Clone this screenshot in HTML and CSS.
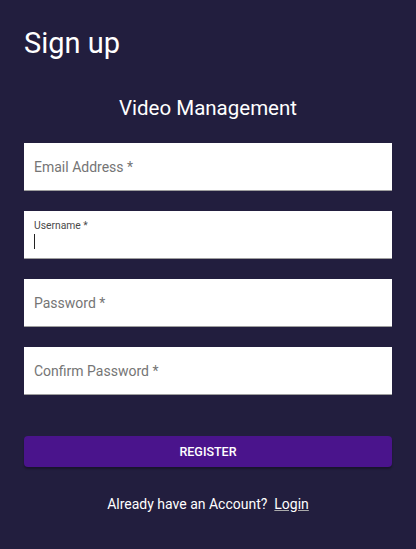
FILE: index.html
```html
<!DOCTYPE html>
<html lang="en">
<head>
<meta charset="utf-8">
<title>Sign up</title>
<link rel="stylesheet" href="styles.css">
</head>
<body>
<main class="page">
  <h1 class="title">Sign up</h1>
  <h2 class="subtitle">Video Management</h2>
  <form class="form">
    <div class="field"><span class="placeholder">Email Address *</span></div>
    <div class="field field-focused"><span class="label">Username *</span><span class="caret"></span></div>
    <div class="field"><span class="placeholder">Password *</span></div>
    <div class="field"><span class="placeholder">Confirm Password *</span></div>
    <button type="button" class="register">REGISTER</button>
  </form>
  <p class="footer">Already have an Account?&nbsp; <a class="login" href="#">Login</a></p>
</main>
</body>
</html>
```
FILE: styles.css
```css
html, body {
  margin: 0;
  padding: 0;
  background: #221e3e;
  font-family: Roboto, "Liberation Sans", sans-serif;
}
.page {
  padding: 24px 24px 0 24px;
  display: flex;
  flex-direction: column;
}
.title {
  margin: 0;
  font-size: 29px;
  font-weight: 400;
  color: #ffffff;
  line-height: 38px;
}
.subtitle {
  margin: 34px 0 0 0;
  font-size: 20.5px;
  font-weight: 400;
  color: #ffffff;
  text-align: center;
  line-height: 24px;
}
.form {
  margin-top: 23px;
  display: flex;
  flex-direction: column;
  gap: 20px;
}
.field {
  position: relative;
  height: 47px;
  background: #ffffff;
  border-bottom: 1px solid #9e9e9e;
  box-sizing: content-box;
  display: flex;
  align-items: center;
  padding: 0 10px;
}
.placeholder {
  font-size: 14px;
  color: #757575;
}
.field-focused {
  flex-direction: column;
  align-items: flex-start;
  justify-content: flex-start;
}
.label {
  margin-top: 8px;
  font-size: 10.3px;
  color: #4a4a4a;
  line-height: 13px;
}
.caret {
  margin-top: 2px;
  width: 1px;
  height: 15px;
  background: #222;
}
.register {
  margin-top: 21px;
  height: 31px;
  border: none;
  border-radius: 4px;
  background: #4a148c;
  color: #ffffff;
  font-family: Roboto, "Liberation Sans", sans-serif;
  font-size: 12.5px;
  font-weight: 500;
  box-shadow: 0 2px 2px rgba(0,0,0,0.3);
}
.footer {
  margin: 27px 0 0 0;
  text-align: center;
  font-size: 14px;
  line-height: 20px;
  color: #ffffff;
}
.login {
  color: #ffffff;
  text-decoration: underline;
  text-decoration-color: #aaa;
}
```
